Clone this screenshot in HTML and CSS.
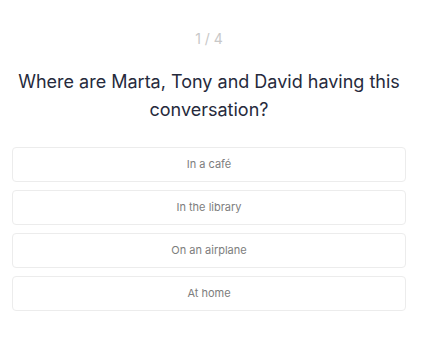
FILE: index.html
```html
<!DOCTYPE html>
<html lang="en">
<head>
    <meta charset="UTF-8">
    <title>Quiz</title>
    <meta name="viewport" content="width=device-width, initial-scale=1.0">
    <link rel="stylesheet" href="styles.css">
</head>
<body>

<div class="quiz">
    <div class="contador">1 / 4</div>

    <h2 class="pregunta">Where are Marta, Tony and David having this conversation?</h2>

    <ul class="opciones">
        <li class="opcion">In a café</li>
        <li class="opcion">In the library</li>
        <li class="opcion">On an airplane</li>
        <li class="opcion">At home</li>
    </ul>
</div>

</body>
</html>
```

FILE: styles.css
```css
body {
    margin: 0;
    background-color: #fff;
    font-family: "Inter", "Noto Sans", sans-serif;
}
.quiz {
    padding: 29px 22px 0 12px;
}
.contador {
    text-align: center;
    color: #c8c8c8;
    font-size: 14px;
    line-height: 20px;
}
.pregunta {
    margin: 19px 0 23px;
    text-align: center;
    color: #262a3c;
    font-size: 18px;
    font-weight: normal;
    line-height: 28px;
}
.opciones {
    list-style: none;
    margin: 0;
    padding: 0;
    display: flex;
    flex-direction: column;
    gap: 8px;
}
.opcion {
    height: 33px;
    line-height: 33px;
    border: 1px solid #ececec;
    border-radius: 4px;
    text-align: center;
    color: #7d7d7d;
    font-size: 11px;
}
```
